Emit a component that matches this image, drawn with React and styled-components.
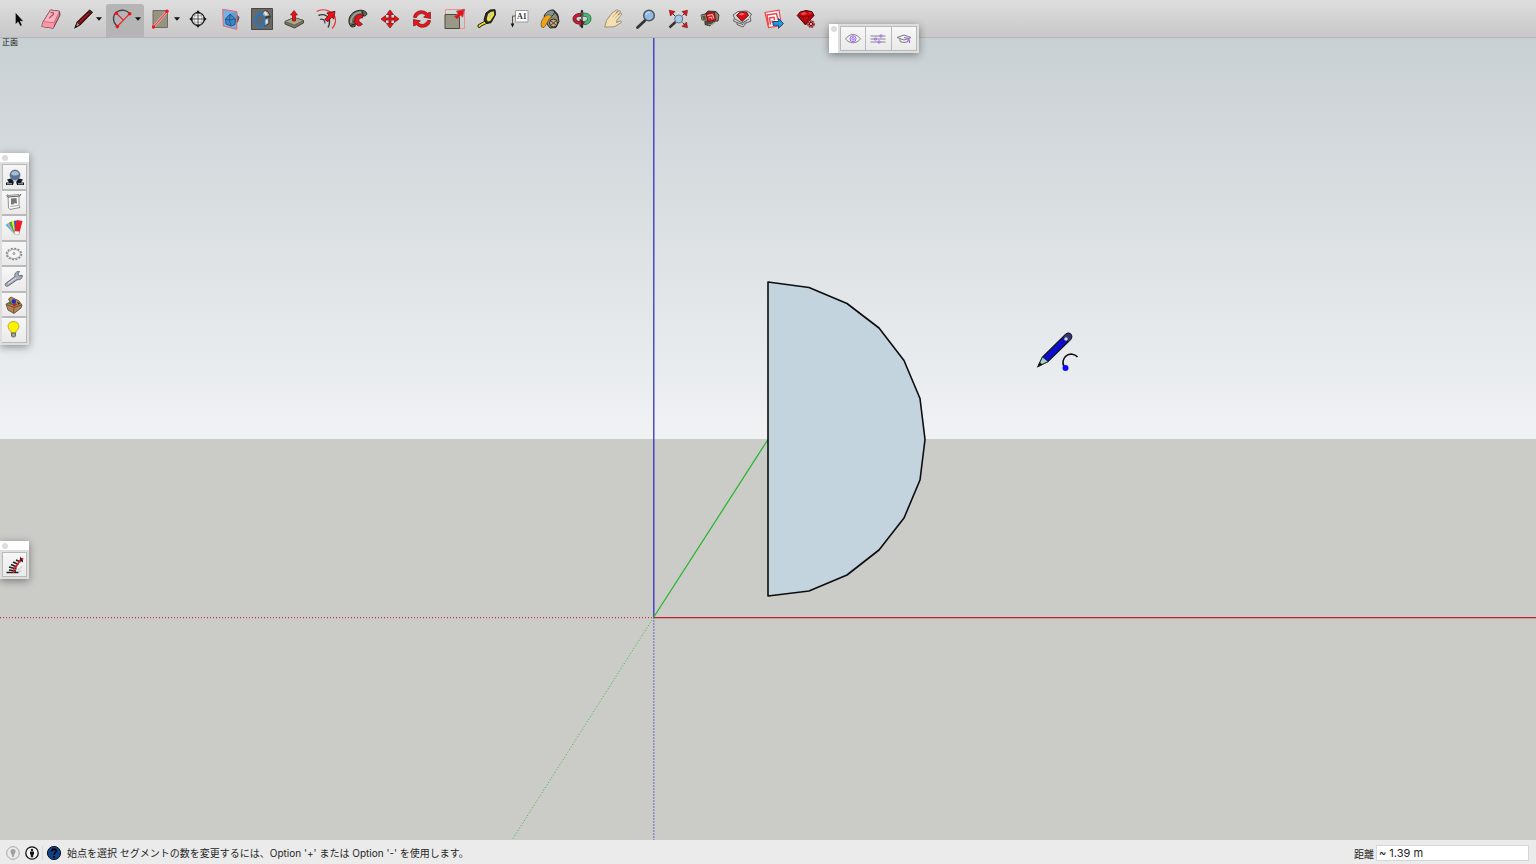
import React, { useState } from 'react';
import styled, { createGlobalStyle } from 'styled-components';

const GlobalStyle = createGlobalStyle`
  * {
    box-sizing: border-box;
  }

  body {
    margin: 0;
    font-family: Inter, 'Noto Sans CJK JP', sans-serif;
    color: #262626;
  }
`;

const Page = styled.div`
  display: flex;
  flex-direction: column;
  height: 100vh;
  overflow: hidden;
`;

const Toolbar = styled.div`
  display: flex;
  flex: none;
  height: 38px;
  padding: 4px 2px 0;
  border-bottom: 1px solid #b4b6b7;
  background: linear-gradient(#dedede, #c8c8c8);
`;

const SplitGroup = styled.div`
  display: flex;
  gap: 1px;
  margin-right: -1px;
  padding-left: 1px;
`;

const ToolButton = styled.button`
  display: flex;
  align-items: center;
  justify-content: center;
  width: ${(props) => (props.$split ? '38px' : '32px')};
  padding: 0 0 3px;
  border: none;
  border-radius: 3px 3px 0 0;
  background-color: ${(props) => (props.$active ? '#b5b5b5' : 'transparent')};

  svg {
    flex: none;
  }
`;

const Viewport = styled.main`
  position: relative;
  flex: 1;
  min-height: 0;
  background: linear-gradient(#c9d0d4 0%, #f0f2f4 50%, #cbccc7 50%);
`;

const Scene = styled.svg`
  display: block;
  width: 100%;
  height: 100%;
`;

const ViewName = styled.div`
  position: absolute;
  top: 0;
  left: 2px;
  font-size: 8px;
  line-height: 8px;
  color: #111;
`;

const Palette = styled.div`
  position: absolute;
  z-index: 2;
  top: ${(props) => props.$top}px;
  left: ${(props) => props.$left}px;
  display: flex;
  flex-direction: ${(props) => (props.$row ? 'row' : 'column')};
  background-color: #dedede;
  box-shadow: 0 2px 8px rgba(0, 0, 0, 0.4);
`;

const Handle = styled.div`
  flex: none;
  width: ${(props) => (props.$row ? '9px' : 'auto')};
  height: ${(props) => (props.$row ? 'auto' : '9px')};
  padding: 2px;
  background-color: #fff;

  &::before {
    content: '';
    display: block;
    width: 6px;
    height: 6px;
    border-radius: 50%;
    background-color: #dcdcdc;
  }
`;

const PaletteBody = styled.div`
  display: flex;
  flex-direction: ${(props) => (props.$row ? 'row' : 'column')};
  width: ${(props) => (props.$row ? '81px' : '29px')};
  height: ${(props) => props.$height}px;
  padding: 2px;
`;

const PaletteButton = styled.button`
  display: flex;
  flex: 1;
  align-items: center;
  justify-content: center;
  min-width: 0;
  min-height: 0;
  padding: 0;
  border: 1px solid #b9b9b9;
  background: linear-gradient(#f7f7f7, #eaeaea);

  & + & {
    border-left-width: ${(props) => (props.$row ? '0' : '1px')};
    border-top-width: ${(props) => (props.$row ? '1px' : '0')};
  }

  svg {
    flex: none;
  }
`;

const StatusBar = styled.footer`
  display: flex;
  flex: none;
  align-items: center;
  gap: 3px;
  height: 24px;
  padding: 2px 7px 0 5px;
  background-color: #ebebeb;
  font-size: 10px;
`;

const StatusButton = styled.button`
  display: flex;
  width: 16px;
  height: 16px;
  padding: 0;
  border: none;
  background: none;
`;

const Divider = styled.span`
  width: 1px;
  height: 14px;
  margin-left: -1px;
  background-color: #dadada;
`;

const Hint = styled.p`
  flex: 1;
  margin: 0;
  padding-left: 2px;
  line-height: 16px;
  white-space: nowrap;
`;

const Measure = styled.label`
  display: flex;
  align-items: center;
  gap: 2px;
`;

const MeasureInput = styled.input`
  width: 153px;
  height: 16px;
  padding: 0 2px;
  border: 1px solid #d6d6d6;
  background-color: #fff;
  font-family: inherit;
  font-size: 11px;
  color: #262626;
  outline: none;
`;

const Svg = ({ size = 24, box = 24, children }) => (
  <svg
    width={size}
    height={size}
    viewBox={`0 0 ${box} ${box}`}
    fill='none'
    aria-hidden='true'
  >
    {children}
  </svg>
);

const Caret = () => (
  <svg width='7' height='4' viewBox='0 0 7 4' aria-hidden='true'>
    <path d='M1 0.3h6L4 3.7z' fill='#111' />
  </svg>
);

const icons = {
  select: (
    <path
      d='M9.4 5.4v12l2.7-2.5 2.1 4.3 2-1-2-4h3.3z'
      fill='#0a0a0a'
      stroke='#f3f3f3'
      strokeWidth='0.4'
    />
  ),
  eraser: (
    <>
      <path d='m12.500 3 9 1.300L22 8l-6.700 13.200-11.500-1.700 1.500-5z' fill='#ee7f94' stroke='#5f3a40' />
      <path d='m5.300 14.500 10.700 1.200-.7 5.300-11.300-1.600z' fill='#ff93a8' />
      <path d='m12.500 3 9 1.300L16 15.700 5.300 14.500z' fill='#ffb0be' stroke='#8b4f59' strokeWidth='0.500' />
      <path d='M12.500 6c1.500-1 3.500-.5 3 1S11 10 11.500 11.500' stroke='#8c5f69' strokeWidth='1.300' />
    </>
  ),
  line: (
    <>
      <path d='m4.200 20.500 2-5.200L18.600 3.200l2.600 2.200L9 17.800z' fill='#8e0f10' stroke='#1d0b08' strokeWidth='1.200' />
      <path d='m4.200 20.500 2-5.200L9 17.800z' fill='#a89772' stroke='#222' strokeWidth='0.800' />
      <path d='m4 20.800.9-2.600 1.700 1.500z' fill='#111' />
      <path d='m8 15.700 9.500-9.500' stroke='#c22' strokeWidth='0.800' />
      <path d='m17 4.800 2.500 2.300 1.700-1.700-2.600-2.200z' fill='#33292b' />
    </>
  ),
  arc: (
    <>
      <path d='M7.300 19.300C1.500 14 3 7 7.500 4.500 12 2.200 17 3 19.700 6.700' stroke='#3f4448' strokeWidth='1.400' />
      <path d='M7.300 19.500 19.700 6.700M6.300 6.300l7 6.700' stroke='#e32a31' strokeWidth='1.200' />
      <circle cx='7.300' cy='19.600' r='1.800' fill='#f3131b' />
      <circle cx='19.700' cy='6.700' r='1.800' fill='#f3131b' />
      <circle cx='6.300' cy='6.300' r='1.800' fill='#f3131b' />
    </>
  ),
  rect: (
    <>
      <path d='M4 3.500h14.500v17H4z' fill='#969380' stroke='#6e6c5f' />
      <path d='M4.500 20 18 4.500' stroke='#ffc0c0' strokeWidth='2.400' />
      <path d='M4.500 20 18 4.500' stroke='#e95058' strokeWidth='1.200' />
      <circle cx='4.500' cy='20' r='1.700' fill='#f3131b' />
      <circle cx='18' cy='4.200' r='1.700' fill='#f3131b' />
    </>
  ),
  lookAround: (
    <>
      <circle cx='12' cy='12' r='6.300' fill='#f3f3f3' stroke='#222' strokeWidth='1.200' />
      <path d='M8 8.800h8M8 15.200h8M9.500 6.500c-2 4-2 7 0 11M14.500 6.500c2 4 2 7 0 11' stroke='#888' strokeWidth='0.600' />
      <path d='M5 12h14M12 5v14' stroke='#444' strokeWidth='0.900' />
      <path d='m12 3.300 2.500 3h-5zM12 20.700l2.500-3h-5zM3.300 12l3-2.500v5zM20.700 12l-3-2.500v5z' fill='#111' />
    </>
  ),
  sectionPlane: (
    <>
      <path d='m12 7 5-1.500 4 5-1.500 4.500-3.500 1.500z' fill='#59636b' stroke='#2f3a42' strokeWidth='0.800' />
      <path d='m4.700 2.300 14.300 2.400-.3 17.600L5.300 19z' fill='#64aae6' fillOpacity='0.850' stroke='#e5646f' />
      <path d='m7.500 12 4.500-5 5.500 5-.5 5.500-4 1.500-5-2z' fill='#3f86c8' stroke='#235079' strokeWidth='0.900' />
      <path d='m12 7-.5 6 1.500 6M7.500 12l4 1 6-1' stroke='#235079' strokeWidth='0.800' />
    </>
  ),
  sectionCut: (
    <>
      <path d='M1.500 1.500h21v21h-21z' fill='#686868' stroke='#484848' />
      <path d='m12 6 3-2.200 3 .7 2.800 5.500-2 1.500.2 5-4 2.500-3-2z' fill='#a7a79e' stroke='#2e2e2c' strokeWidth='0.800' />
      <path d='m14.500 9.500 5-1 1.300 1.700-5.500 2z' fill='#3d3d3a' />
      <path d='m13.500 5 2-.8 2.500 3.500-2.300.8z' fill='#e8e8e4' />
      <path d='m15.500 13 2-.5v3.500l-2 1z' fill='#eee' />
      <path d='m5.500 11.500 4.200-6 4.800 4.800V17L10.300 20 5.500 16z' fill='#5d666c' stroke='#157bd5' strokeWidth='1.600' />
    </>
  ),
  pushPull: (
    <>
      <path d='m3 14.500 9-4 9.500 3v2.500l-9 5L3 17z' fill='#77745f' stroke='#45443a' />
      <path d='m3 14.500 9-4 9.500 3-9 4.500z' fill='#aaa78d' stroke='#5b594a' strokeWidth='0.700' />
      <path d='M12 3.500 15.500 8H13.500v6h-3V8h-2z' fill='#f20d17' stroke='#7d1116' strokeWidth='0.700' />
    </>
  ),
  offset: (
    <>
      <path d='M2.700 4.500C9 .5 21 4 21.500 13c0 3-1 6-3.500 8.500' stroke='#e8323a' strokeWidth='1.200' />
      <path d='M4.500 8.500c5.500-2.500 11.500 1 11 6.500 0 2-.5 4-1.500 5.500' stroke='#373737' strokeWidth='1.400' />
      <path d='M6 12.500c3-1 5 .5 5 4' stroke='#444' strokeWidth='1.300' />
      <path d='m10.800 12.500 4-4.500-2-2 8.200-1.700-1.300 7.700-2-1.800-3.700 4.500z' fill='#f30d17' stroke='#571015' strokeWidth='0.800' />
    </>
  ),
  followMe: (
    <>
      <path
        d='M3.500 17.500C1 10 6.500 3.500 14.500 3.200c3 0 6 1.300 6.300 3.300.2 1.500-1.500 3-4 2.500-5-1-8.300 2.500-7.300 6.500l-.5 4-3.500.5z'
        fill='#66675c'
        stroke='#252621'
      />
      <path d='M5 16c-.5-6 4-10.500 10-10.800' stroke='#a5a493' strokeWidth='1.500' />
      <path d='M4.500 18.500 9 17M16 4l1.500 5' stroke='#22231e' />
      <path
        d='M16.500 7.800c-5-1.300-8.500 1.700-7.500 6l-1.500.7 4.500 4.500 3-.5 1.500-1.500-3.500-2.500c-.8-2.500 1-4 3.500-3.500z'
        fill='#eb111a'
        stroke='#561317'
        strokeWidth='0.700'
      />
    </>
  ),
  move: (
    <path
      d='m12 3 3.500 4.500H13V11h3.500V8.500L21 12l-4.500 3.500V13H13v3.500h2.500L12 21l-3.500-4.500H11V13H7.500v2.500L3 12l4.500-3.500V11H11V7.500H8.500z'
      fill='#f20d16'
      stroke='#6e1519'
      strokeWidth='0.700'
    />
  ),
  rotate: (
    <g fill='#ed131c' stroke='#741519' strokeWidth='0.700'>
      <path d='M3.500 10.500C4 3 14 2 17.500 6.300L20.300 5l.3 6.500-7-1.300 2-2C12 5 8 7 6.500 10.500z' />
      <path d='M20.500 13.500C20 21 10 22 6.500 17.700L3.700 19l-.3-6.500 7 1.300-2 2c3.600 3.200 7.600 1.200 9.100-2.300z' />
    </g>
  ),
  scale: (
    <>
      <path d='M3.500 2.500h19v19h-19z' stroke='#ee8a90' strokeWidth='0.900' />
      <path d='M3 7.500h14.500v14H3z' fill='#9b9885' stroke='#4c4b40' />
      <path d='m12.300 9.800 3.700-3.300-1.500-2.300 8-2-1.800 8-2-2-3.500 3.800z' fill='#f20d16' stroke='#fff' strokeWidth='0.500' />
      <path d='m12.300 9.800 3.700-3.300-1.500-2.300 8-2-1.800 8-2-2-3.500 3.800z' stroke='#6c171b' strokeWidth='0.600' />
    </>
  ),
  tape: (
    <>
      <path d='m4 18 8-4.500 1.500 2.500-6.500 3-1 1.500-2-.5z' fill='#f0df20' stroke='#262410' />
      <path d='m12 6 4-3 5-.3.5 5-4.500 8-4.500.8-2.500-3.500z' fill='#292926' stroke='#161616' />
      <path d='m14 7 3-2.300 3-.2.2 3.500-4 6-2.500.5-1-2.500z' fill='#f0e33a' />
      <path d='m14.500 8 2.500-2 1.500 1-3 5z' fill='#c4ccb0' />
    </>
  ),
  text: (
    <>
      <path d='M9.500 3.500h12.500v11.500H9.500z' fill='#fff' stroke='#999' />
      <path d='M9.500 9H6.500v9' stroke='#555' />
      <path d='m6.500 20.500-1.800-4h3.600z' fill='#111' />
      <text x='11' y='12' fontFamily='Liberation Serif, serif' fontSize='8' fontWeight='bold' fill='#333'>
        A1
      </text>
    </>
  ),
  paint: (
    <>
      <path d='m8 9 7-6 5 6.500 1 5-3 6-6 .5-3-4z' fill='#8b8a79' stroke='#272622' />
      <path d='M6 9.500c1-4 6-7 9.500-6.500 2 .5 1 4-1.500 6l-5 3z' fill='#7b97a1' stroke='#25282a' />
      <path d='M3.500 20C2 15 5 9 11 7.500l3 2.500c-4 1-4.500 7-8 10.500z' fill='#f1a31c' stroke='#654b1d' strokeWidth='0.700' />
      <circle cx='15.500' cy='16' r='4' fill='#c3ab7d' stroke='#2b2a24' />
      <path d='m13 14 5 4M18.500 13.500l-6 5' stroke='#3d3a2f' strokeWidth='0.900' />
      <path d='M15 3.500c3.500 1.500 5.500 5 5.500 9' stroke='#2b2a24' strokeWidth='1.200' />
    </>
  ),
  orbit: (
    <>
      <path
        d='M13 6.300c5-.8 8 1.700 8 5.200 0 4-3.500 6.500-7.500 6v-3c2.500 0 4-.8 4-2.700s-1.500-2.500-4.500-2.500z'
        fill='#4cb878'
        stroke='#23603c'
        strokeWidth='0.800'
      />
      <path
        d='M11 6.300C6 6.300 3 8.500 3 12c0 3 3 5.200 7 5.200v2.300l4.500-3.700L10 12.300v2.200c-2.500 0-4-.8-4-2.700s2-2.500 5-2.500z'
        fill='#c51c34'
        stroke='#5b1520'
        strokeWidth='0.800'
      />
      <path d='M12 3v18' stroke='#18231c' strokeWidth='1.200' />
      <path d='m12 2.500 1.600 3h-3.200zM12 21.500l1.600-3h-3.200z' fill='#18231c' />
    </>
  ),
  pan: (
    <>
      <path
        d='M2.700 20 4.500 13.500 10 6l4.500-3c1-.5 2 .3 1.200 1l-2 2.500L17 3.800c1-.4 2 .5 1.200 1.300L16 8.100l2.500-1.800c1-.4 1.800.5 1 1.400L15 13l-.5 2.500 4-1.500c1 0 1.500 1 .7 1.600L13.500 19c-2 1.500-4 .5-6 1z'
        fill='#f6dfb2'
        stroke='#8c7e65'
        strokeWidth='0.800'
      />
      <path d='m13.700 6.500-3 3.500M16 8.100l-3 3' stroke='#bda57b' strokeWidth='0.700' />
    </>
  ),
  zoom: (
    <>
      <path d='m3.500 20.500 7.500-7' stroke='#333' strokeWidth='2.800' strokeLinecap='round' />
      <circle cx='15' cy='8.500' r='5.300' fill='#93bce2' stroke='#4c555e' strokeWidth='1.500' />
      <path d='M12 8c0-2 2-3 4-2.500' stroke='#d7eaff' />
    </>
  ),
  zoomExtents: (
    <>
      <path d='m3.500 20.500 6-5.500' stroke='#333' strokeWidth='2.400' />
      <path d='m5 5 4 4M20 5l-3.500 3.500M20 19l-3.500-3.500' stroke='#333' />
      <circle cx='12.700' cy='12' r='4' fill='#a5cbea' stroke='#607585' />
      <path
        d='m3.300 3.300 5.700 1.200L4.500 9zM21.500 3.300 16 4.500 20.500 9zM21.500 20.700 16 19.500l4.500-4.500z'
        fill='#e4131b'
        stroke='#641519'
        strokeWidth='0.600'
      />
    </>
  ),
  warehouse: (
    <>
      <path d='m3 8 4-1 3-3 8 .5L21 8l-1 6-5 1-3 4-5-1.500V14l-3-1z' fill='#57503f' stroke='#292823' strokeWidth='0.800' />
      <path d='m3.500 8.500 4-.5 1 5-3.500.5zM10 18l5-1 4-3.500' stroke='#9b9078' />
      <path d='m8 6.500 8-1.500 2 7.500-8 2.500z' fill='#db1921' stroke='#671317' strokeWidth='0.800' />
      <path d='m9.500 8.500 5-1 1.300 4M10.500 11l3-.8.500 2.300' stroke='#ffc0c0' />
      <path d='m17 5 3.500 3-1 5.500-1.500-1z' fill='#8d7c62' />
    </>
  ),
  extensionWarehouse: (
    <>
      <path d='m3 8 5-3.500 9-.5 4.500 3L20 10l1 4-5 2-3 4-6-2.500v-2L3.500 14l1-3z' fill='#d6d6d4' stroke='#444' strokeWidth='0.800' />
      <path d='m5 12 7 4 7-4M7 15.500l6 2 3-3' stroke='#555' strokeWidth='0.900' />
      <path d='m6.500 8.500 3-3L13 4.800l4 .7 1.500 3-6.500 6z' fill='#d31019' stroke='#57090d' strokeWidth='0.800' />
      <path d='m8.500 7.500 3.500-1.700 3 1.200-3.500 1.500z' fill='#ff6565' />
    </>
  ),
  layout: (
    <>
      <path d='m3 5.500 14-2.300 2.500 15.300-13 2z' fill='#fff' stroke='#ee444b' strokeWidth='1.200' />
      <path d='m6.500 18.500-1.500-10.500 9.500-1.500 1.500 6M8.500 17.500 7.500 11l4.500-.7.500 3M10.500 16l-.5-2.500' stroke='#ee444b' strokeWidth='1.500' />
      <path d='M11 14.500h5.500v-3l5 5-5 4.800v-3H11z' fill='#2497e6' stroke='#174a73' />
    </>
  ),
  extensionManager: (
    <>
      <path d='m3.200 8.500 3-3.500L12 3.500l6 1.200 2 3.800-8.500 9.500z' fill='#c4090f' stroke='#3d0608' />
      <path d='m4 8.800 4.500.7L15.500 9l4-.5M8.500 9.500l3 8 4-8.500' stroke='#700307' strokeWidth='0.700' />
      <path d='m6.500 6.500 4-1.700L13 7 9 8.200zM14.500 5l3.500.6-2 1.400z' fill='#f04348' />
      <circle cx='17' cy='17' r='3' fill='#c9a5a5' stroke='#a41d24' strokeWidth='1.800' strokeDasharray='1.800 .7' />
      <circle cx='17' cy='17' r='1.700' stroke='#6a1a1d' />
    </>
  ),
  eye: (
    <>
      <path d='M1.500 9c4-6 11-6 15 0-4 5-11 5-15 0z' stroke='#88858f' />
      <circle cx='9' cy='8.800' r='3' stroke='#a06aee' />
      <circle cx='9' cy='8.800' r='1.300' stroke='#a06aee' />
    </>
  ),
  sliders: (
    <>
      <path d='M1.500 6h15M1.500 9h15M1.500 12h15' stroke='#85838a' />
      <g fill='#c9a7ff' stroke='#9c61f1' strokeWidth='0.800'>
        <circle cx='12' cy='6' r='1.200' />
        <circle cx='6.500' cy='9' r='1.200' />
        <circle cx='10' cy='12' r='1.200' />
      </g>
    </>
  ),
  cap: (
    <>
      <path d='m2 7.500 7-2.500 7 2.500L9 10zM5 9v2.500c2.500 1.200 5.500 1.200 8 0V9' stroke='#7d7a82' />
      <path d='m9 7.500 5 1v2.500M14.500 10.500v2.500' stroke='#a061f0' strokeWidth='1.200' />
    </>
  ),
  sphere: (
    <>
      <circle cx='10' cy='8' r='5' fill='#567596' stroke='#4c5864' strokeWidth='0.600' />
      <path d='M6 7c1-4 7-4 8 0-2 2-6 2-8 0z' fill='#a6bdd5' />
      <path d='m2 12.500 4-1 3 3-1 3.500H1v-2.500h3zM18 12.500l-4-1-3 3 1 3.500h7v-2.500h-3z' fill='#151a20' />
      <path d='M8 14h4M2 16.800h5M13 16.800h5' stroke='#a7bfd0' />
    </>
  ),
  scroll: (
    <>
      <path d='m4 3.500 11-1v11l1 2-10 2-1.500-2z' fill='#f8f8f8' stroke='#777' strokeWidth='0.800' />
      <path d='M3.500 2.500c-1 1-.5 2.500 1 2.500L15 4c1.500-.2 2-1 1.500-2' stroke='#555' />
      <path d='m7 6.500 5.500-.5.5 5.500-3-.3-.5 1.300L7 12.500z' fill='#777' />
      <path d='m6.500 14.500 8-1' stroke='#aaa' />
    </>
  ),
  swatches: (
    <>
      <path d='m1.500 7 2-1.500L11 17z' fill='#50bdd7' />
      <path d='m3.500 5.500 2.500-1L11 17z' fill='#ee83c4' />
      <path d='m5 4.500 3-1.300L11 17z' fill='#20bd37' />
      <path d='m7.500 3.200 2.800-.5L11 17z' fill='#f0e52d' />
      <path d='m10 2.700 3-.2-2 13.500z' fill='#3e48cb' />
      <path d='m12.800 2 5.700 1-3.500 13.500-5-1z' fill='#ef1c24' />
      <path d='m10.700 13 4.800.6-1 3.400-4.400-1z' fill='#fff' stroke='#888' strokeWidth='0.400' />
    </>
  ),
  gear: (
    <>
      <ellipse cx='10' cy='10' rx='7.500' ry='5.500' stroke='#8a8a8a' strokeWidth='1.600' strokeDasharray='2 1.400' />
      <ellipse cx='10' cy='10' rx='6.400' ry='4.500' fill='#f5f5f5' stroke='#777' strokeWidth='0.600' />
      <circle cx='10' cy='9.500' r='1' stroke='#777' strokeWidth='0.800' />
    </>
  ),
  wrench: (
    <>
      <path
        d='M1.500 14.500 11 7.500c-1-3 1.500-5.500 4.500-5L13.800 5l1.400 2 3-.8c.5 3-2 5-5 4.500L4 17c-2 1-3.500-1-2.500-2.500z'
        fill='#a9b0bc'
        stroke='#555e69'
        strokeWidth='0.900'
      />
      <path d='m4 14.500 8-5.500' stroke='#e0e5eb' />
    </>
  ),
  box: (
    <>
      <path d='m2 9 4-2-1.500-3L7 2l4 2 3.500 1.500L18 10l-1 3-7 5.500L4 15z' fill='#b18555' stroke='#604329' strokeWidth='0.800' />
      <path d='m2.500 9.500 7.500 3 7.500-2.500M10 12.500l-.5 5.500' stroke='#60452d' strokeWidth='0.800' />
      <path d='m4.500 9 2-2.500L8.500 10z' fill='#188a36' />
      <circle cx='9.800' cy='6.500' r='2.200' fill='#152bc7' />
      <path d='m8 9.500 3-1.500 2.500 1.500-3.500 2z' fill='#c91e22' />
      <path d='m13 7 3 1-1.500 2z' fill='#382416' />
    </>
  ),
  bulb: (
    <>
      <path d='M7 11.500C1.500 6.500 4.500 1.500 9.500 1.500s8 5 2.500 10V13H7z' fill='#fff200' stroke='#a09c2d' strokeWidth='0.800' />
      <path d='M7.500 13h4v3l-1 1h-2l-1-1z' fill='#9fa3a5' stroke='#4c5153' strokeWidth='0.800' />
    </>
  ),
  coil: (
    <>
      <path d='M1.500 17.500h12M4 15l7 1M4 12l7.500 2M6 9.500l6 2.500M8 7l5.500 2.500M11 5l4.500 2' stroke='#222' strokeWidth='1.700' />
      <path d='M8.500 18 9 14l3-4 4.500-6.500' stroke='#e41a20' strokeWidth='1.500' />
      <path d='m15 1.500 3 3.500v2.500l-3-2z' fill='#382023' />
      <path d='m17 3 1 1.500' stroke='#e41a20' strokeWidth='1.500' />
      <path d='m13 15 5-4M14 17l3-2' stroke='#b8b8b8' strokeDasharray='2 1' />
    </>
  ),
};

const pointerTools = [
  ['select', '選択'],
  ['eraser', '消しゴム'],
];

const splitTools = [
  ['line', '線'],
  ['arc', '円弧'],
  ['rect', '長方形'],
];

const tools = [
  ['lookAround', 'ピボット'],
  ['sectionPlane', '断面平面'],
  ['sectionCut', '断面カット'],
  ['pushPull', 'プッシュ/プル'],
  ['offset', 'オフセット'],
  ['followMe', 'フォローミー'],
  ['move', '移動'],
  ['rotate', '回転'],
  ['scale', '尺度'],
  ['tape', 'メジャー'],
  ['text', 'テキスト'],
  ['paint', 'ペイント'],
  ['orbit', 'オービット'],
  ['pan', 'パン表示'],
  ['zoom', 'ズーム'],
  ['zoomExtents', '全体表示'],
  ['warehouse', '3D Warehouse'],
  ['extensionWarehouse', 'Extension Warehouse'],
  ['layout', 'LayOut'],
  ['extensionManager', '拡張機能マネージャー'],
];

const ToolPalette = ({ top, left, height, row, size, items }) => (
  <Palette $top={top} $left={left} $row={row}>
    <Handle $row={row} />
    <PaletteBody $row={row} $height={height}>
      {items.map((name) => (
        <PaletteButton key={name} $row={row} aria-label={name}>
          <Svg size={size} box={size}>
            {icons[name]}
          </Svg>
        </PaletteButton>
      ))}
    </PaletteBody>
  </Palette>
);

export default function App() {
  const [active, setActive] = useState('arc');
  const [distance, setDistance] = useState('~ 1.39 m');

  const renderTool = ([name, label], split) => (
    <ToolButton
      key={name}
      aria-label={label}
      $split={split}
      $active={active === name}
      onClick={() => setActive(name)}
    >
      <Svg>{icons[name]}</Svg>
      {split && <Caret />}
    </ToolButton>
  );

  return (
    <Page>
      <GlobalStyle />
      <Toolbar>
        {pointerTools.map((tool) => renderTool(tool, false))}
        <SplitGroup>{splitTools.map((tool) => renderTool(tool, true))}</SplitGroup>
        {tools.map((tool) => renderTool(tool, false))}
      </Toolbar>

      <Viewport>
        <Scene viewBox='0 38 1536 802' preserveAspectRatio='xMidYMid slice' fill='none'>
          {/* axes */}
          <path d='M653.800 617.500V38' stroke='#3431c4' strokeWidth='1.300' />
          <path d='M653.800 617.500V840' stroke='#3431c4' strokeWidth='1.300' strokeDasharray='1 2' />
          <path d='M653.500 617.700H1536' stroke='#bd1f2c' strokeWidth='1.300' />
          <path d='M0 617.700h653.500' stroke='#c23a44' strokeWidth='1.300' strokeDasharray='1 2' />
          <path d='m653.500 617.500 114.500-178' stroke='#1fb52c' strokeWidth='1.200' />
          <path d='M653.500 617.500 512 840' stroke='#35b93c' strokeDasharray='1 2' />
          {/* half disc */}
          <path
            d='m768 282 41 5.500 38 16 32 24.500 25 32.500 16 38 5 41-5 40.500-16 38L879 550l-32 25-38 16-41 5z'
            fill='#c4d4df'
            stroke='#0b0d0e'
            strokeWidth='1.600'
            strokeLinejoin='round'
          />
          {/* pencil cursor */}
          <path d='m1038 366.500 4.500-9.500 23-22.500c3-4 8.500 1 5 5L1048 361.500z' fill='#0d0dd0' stroke='#111' strokeWidth='1.200' />
          <path d='m1038 366.500 4.500-9.500 5.500 4.500z' fill='#9fd4cf' stroke='#222' strokeWidth='0.800' />
          <path d='m1037.500 367 2-5 3 2.500z' fill='#111' />
          <path d='m1063.500 336.500 5 5 2.500-2.500c2-4-2-7-5-5z' fill='#34347c' stroke='#222' strokeWidth='0.800' />
          <circle cx='1066' cy='339' r='1.800' fill='#d6d6cc' />
          <path d='M1077.500 357a8.300 8.300 0 0 0-13.500 9.500' stroke='#111' strokeWidth='1.600' />
          <circle cx='1065.500' cy='368' r='3' fill='#0a0aff' />
        </Scene>
        <ViewName>正面</ViewName>
        <ToolPalette
          top={115}
          left={0}
          height={183}
          size={20}
          items={['sphere', 'scroll', 'swatches', 'gear', 'wrench', 'box', 'bulb']}
        />
        <ToolPalette top={503} left={0} height={29} size={20} items={['coil']} />
        <ToolPalette top={-14} left={829} height={29} size={18} row items={['eye', 'sliders', 'cap']} />
      </Viewport>

      <StatusBar>
        <StatusButton aria-label='位置情報'>
          <Svg size={16} box={16}>
            <circle cx='8' cy='8' r='6.300' stroke='#a7a7a7' />
            <path
              d='M8 4a2.600 2.600 0 0 0-2.600 2.600C5.400 8 7 9 7.300 12h1.400C9 9 10.600 8 10.600 6.600A2.600 2.600 0 0 0 8 4z'
              fill='#a0a0a0'
            />
          </Svg>
        </StatusButton>
        <StatusButton aria-label='クレジット'>
          <Svg size={16} box={16}>
            <circle cx='8' cy='8' r='6.200' fill='#f5f5f5' stroke='#111' strokeWidth='1.300' />
            <circle cx='8' cy='4.900' r='1.200' fill='#111' />
            <path d='M6 6.600h4v3H9.200v2.600H6.800V9.600H6z' fill='#111' />
          </Svg>
        </StatusButton>
        <Divider />
        <StatusButton aria-label='ヘルプ'>
          <Svg size={16} box={16}>
            <circle cx='8' cy='8' r='6.600' fill='#134188' stroke='#101722' />
            <path d='M5.800 6.400c0-3 4.600-2.700 4.500-.2C10.200 7.700 8 7.600 8 9.700' stroke='#05080e' strokeWidth='1.800' />
            <circle cx='8' cy='11.800' r='1.100' fill='#05080e' />
          </Svg>
        </StatusButton>
        <Hint>始点を選択 セグメントの数を変更するには、Option '+' または Option '-' を使用します。</Hint>
        <Measure>
          距離
          <MeasureInput
            type='text'
            value={distance}
            onChange={(e) => setDistance(e.target.value)}
          />
        </Measure>
      </StatusBar>
    </Page>
  );
}
